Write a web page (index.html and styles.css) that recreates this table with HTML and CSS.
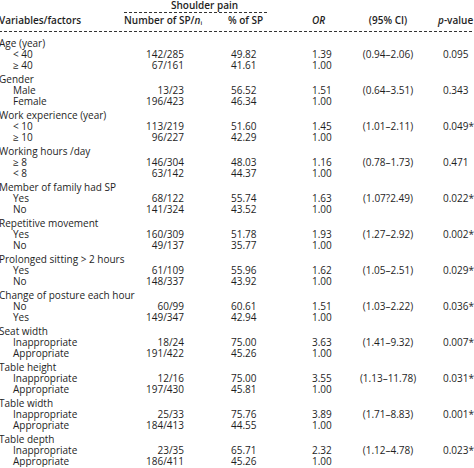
FILE: index.html
```html
<!DOCTYPE html>
<html lang="en">
<head>
<meta charset="utf-8">
<title>Shoulder pain factors</title>
<link rel="stylesheet" href="styles.css">
</head>
<body>
<div class="table">
  <div class="span-head">Shoulder pain</div>
  <div class="dash dash-span"></div>
  <div class="row head">
    <span class="lbl">Variables/factors</span>
    <span class="num">Number of SP/<i>n</i><sub>i</sub></span>
    <span class="pct">% of SP</span>
    <span class="or"><i>OR</i></span>
    <span class="ci">(95% CI)</span>
    <span class="p"><i>p</i>-value</span>
  </div>
  <div class="dash dash-full"></div>

  <div class="group">
    <div class="row"><span class="lbl">Age (year)</span></div>
    <div class="row sub"><span class="lbl">&lt; 40</span><span class="num">142/285</span><span class="pct">49.82</span><span class="or">1.39</span><span class="ci">(0.94–2.06)</span><span class="p">0.095</span></div>
    <div class="row sub"><span class="lbl">≥ 40</span><span class="num">67/161</span><span class="pct">41.61</span><span class="or">1.00</span></div>
  </div>
  <div class="group">
    <div class="row"><span class="lbl">Gender</span></div>
    <div class="row sub"><span class="lbl">Male</span><span class="num">13/23</span><span class="pct">56.52</span><span class="or">1.51</span><span class="ci">(0.64–3.51)</span><span class="p">0.343</span></div>
    <div class="row sub"><span class="lbl">Female</span><span class="num">196/423</span><span class="pct">46.34</span><span class="or">1.00</span></div>
  </div>
  <div class="group">
    <div class="row"><span class="lbl">Work experience (year)</span></div>
    <div class="row sub"><span class="lbl">&lt; 10</span><span class="num">113/219</span><span class="pct">51.60</span><span class="or">1.45</span><span class="ci">(1.01–2.11)</span><span class="p">0.049*</span></div>
    <div class="row sub"><span class="lbl">≥ 10</span><span class="num">96/227</span><span class="pct">42.29</span><span class="or">1.00</span></div>
  </div>
  <div class="group">
    <div class="row"><span class="lbl">Working hours /day</span></div>
    <div class="row sub"><span class="lbl">≥ 8</span><span class="num">146/304</span><span class="pct">48.03</span><span class="or">1.16</span><span class="ci">(0.78–1.73)</span><span class="p">0.471</span></div>
    <div class="row sub"><span class="lbl">&lt; 8</span><span class="num">63/142</span><span class="pct">44.37</span><span class="or">1.00</span></div>
  </div>
  <div class="group">
    <div class="row"><span class="lbl">Member of family had SP</span></div>
    <div class="row sub"><span class="lbl">Yes</span><span class="num">68/122</span><span class="pct">55.74</span><span class="or">1.63</span><span class="ci">(1.07?2.49)</span><span class="p">0.022*</span></div>
    <div class="row sub"><span class="lbl">No</span><span class="num">141/324</span><span class="pct">43.52</span><span class="or">1.00</span></div>
  </div>
  <div class="group">
    <div class="row"><span class="lbl">Repetitive movement</span></div>
    <div class="row sub"><span class="lbl">Yes</span><span class="num">160/309</span><span class="pct">51.78</span><span class="or">1.93</span><span class="ci">(1.27–2.92)</span><span class="p">0.002*</span></div>
    <div class="row sub"><span class="lbl">No</span><span class="num">49/137</span><span class="pct">35.77</span><span class="or">1.00</span></div>
  </div>
  <div class="group">
    <div class="row"><span class="lbl">Prolonged sitting &gt; 2 hours</span></div>
    <div class="row sub"><span class="lbl">Yes</span><span class="num">61/109</span><span class="pct">55.96</span><span class="or">1.62</span><span class="ci">(1.05–2.51)</span><span class="p">0.029*</span></div>
    <div class="row sub"><span class="lbl">No</span><span class="num">148/337</span><span class="pct">43.92</span><span class="or">1.00</span></div>
  </div>
  <div class="group">
    <div class="row"><span class="lbl">Change of posture each hour</span></div>
    <div class="row sub"><span class="lbl">No</span><span class="num">60/99</span><span class="pct">60.61</span><span class="or">1.51</span><span class="ci">(1.03–2.22)</span><span class="p">0.036*</span></div>
    <div class="row sub"><span class="lbl">Yes</span><span class="num">149/347</span><span class="pct">42.94</span><span class="or">1.00</span></div>
  </div>
  <div class="group">
    <div class="row"><span class="lbl">Seat width</span></div>
    <div class="row sub"><span class="lbl">Inappropriate</span><span class="num">18/24</span><span class="pct">75.00</span><span class="or">3.63</span><span class="ci">(1.41–9.32)</span><span class="p">0.007*</span></div>
    <div class="row sub"><span class="lbl">Appropriate</span><span class="num">191/422</span><span class="pct">45.26</span><span class="or">1.00</span></div>
  </div>
  <div class="group">
    <div class="row"><span class="lbl">Table height</span></div>
    <div class="row sub"><span class="lbl">Inappropriate</span><span class="num">12/16</span><span class="pct">75.00</span><span class="or">3.55</span><span class="ci">(1.13–11.78)</span><span class="p">0.031*</span></div>
    <div class="row sub"><span class="lbl">Appropriate</span><span class="num">197/430</span><span class="pct">45.81</span><span class="or">1.00</span></div>
  </div>
  <div class="group">
    <div class="row"><span class="lbl">Table width</span></div>
    <div class="row sub"><span class="lbl">Inappropriate</span><span class="num">25/33</span><span class="pct">75.76</span><span class="or">3.89</span><span class="ci">(1.71–8.83)</span><span class="p">0.001*</span></div>
    <div class="row sub"><span class="lbl">Appropriate</span><span class="num">184/413</span><span class="pct">44.55</span><span class="or">1.00</span></div>
  </div>
  <div class="group">
    <div class="row"><span class="lbl">Table depth</span></div>
    <div class="row sub"><span class="lbl">Inappropriate</span><span class="num">23/35</span><span class="pct">65.71</span><span class="or">2.32</span><span class="ci">(1.12–4.78)</span><span class="p">0.023*</span></div>
    <div class="row sub"><span class="lbl">Appropriate</span><span class="num">186/411</span><span class="pct">45.26</span><span class="or">1.00</span></div>
  </div>
</div>
</body>
</html>
```

FILE: styles.css
```css
html, body {
  margin: 0;
  padding: 0;
  background: #ffffff;
  overflow: hidden;
}
body {
  font-family: "Open Sans", Lato, sans-serif;
  font-size: 10px;
  color: #1e1e1e;
}
.table {
  width: 484px;
  margin-left: -1px;
}
.span-head {
  margin-left: 172px;
  height: 10px;
  line-height: 10px;
  font-weight: 600;
  white-space: nowrap;
}
.dash {
  height: 1px;
  background: repeating-linear-gradient(90deg, #333 0 3px, transparent 3px 5px);
}
.dash-span {
  margin-top: 2px;
  margin-left: 125px;
  width: 144px;
}
.dash-full {
  margin-top: 5px;
  margin-bottom: 3px;
  width: 480px;
}
.row {
  display: grid;
  grid-template-columns: 125px 107px 81px 21px 110px 40px;
  height: 11px;
  line-height: 11px;
  white-space: nowrap;
}
.head {
  margin-top: 2px;
  font-weight: 600;
}
.group {
  padding-top: 3px;
}
.lbl {
  grid-column: 1;
}
.sub .lbl {
  padding-left: 14px;
}
.num {
  grid-column: 2;
  text-align: right;
  padding-right: 47px;
}
.pct {
  grid-column: 3;
}
.or {
  grid-column: 4;
}
.ci {
  grid-column: 5;
  display: flex;
  justify-content: center;
}
.p {
  grid-column: 6;
}
.head .num {
  text-align: left;
  padding-right: 0;
}
.head .pct {
  margin-left: -3px;
}
.head .p {
  margin-left: -5px;
}
sub {
  font-size: 6px;
  line-height: 0;
  vertical-align: -1px;
}
```
